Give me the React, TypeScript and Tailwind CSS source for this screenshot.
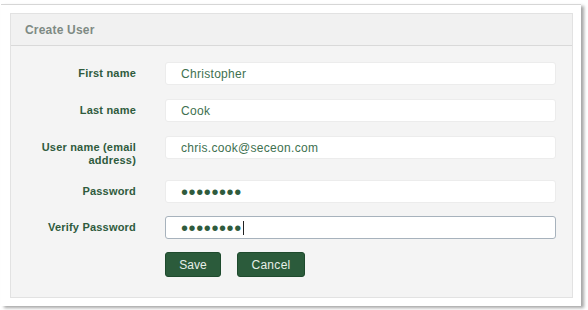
import React from "react";

const font = { fontFamily: '"Liberation Sans", Arial, sans-serif' };

function Label({ children }: { children: React.ReactNode }) {
  return (
    <div className="w-[125px] shrink-0 pt-[5px] text-right text-[11px] leading-[13px] font-bold tracking-[0.2px] text-[#2f5b3d]">
      {children}
    </div>
  );
}

function Field({ value, focused, dots }: { value: string; focused?: boolean; dots?: boolean }) {
  return (
    <div
      className={
        "ml-[29px] flex h-[23px] w-[391px] items-center rounded-[3px] bg-white pl-[15px] " +
        (focused ? "border border-[#a7b2bc]" : "border border-[#ececec]")
      }
    >
      {dots ? (
        <span className="text-[20px] leading-none tracking-[0.6px] text-[#2f5b3d]">{value}</span>
      ) : (
        <span className="text-[12px] tracking-[0.3px] text-[#40704f]">{value}</span>
      )}
      {focused && <span className="ml-[1px] h-[14px] w-px bg-[#222]" />}
    </div>
  );
}

export default function App() {
  return (
    <div className="h-[310px] w-[588px] bg-white" style={font}>
      <div className="ml-[1px] mt-[4px] h-[302px] w-[580px] border-t border-[#d6d6d6] bg-white pl-[9px] pt-[8px] shadow-[3px_2px_3px_rgba(0,0,0,0.35)]">
        <div className="h-[285px] w-[563px] border border-[#e2e2e2] bg-[#f4f4f4]">
          <div className="flex h-[32px] items-center border-b border-[#d9d9d9] bg-[#f1f1f1] pl-[14px] text-[12px] font-bold tracking-[0.2px] text-[#7e8a84]">
            Create User
          </div>

          <div className="flex flex-col pt-[16px]">
            <div className="flex items-start">
              <Label>First name</Label>
              <Field value="Christopher" />
            </div>
            <div className="mt-[14px] flex items-start">
              <Label>Last name</Label>
              <Field value="Cook" />
            </div>
            <div className="mt-[14px] flex items-start">
              <Label>
                User name (email
                <br />
                address)
              </Label>
              <Field value="chris.cook@seceon.com" />
            </div>
            <div className="mt-[13px] flex items-start">
              <Label>Password</Label>
              <Field value="••••••••" dots />
            </div>
            <div className="mt-[13px] flex items-start">
              <Label>Verify Password</Label>
              <Field value="••••••••" dots focused />
            </div>
            <div className="ml-[154px] mt-[13px] flex gap-[16px]">
              <button className="h-[25px] w-[56px] rounded-[3px] border border-[#1e4a2d] bg-[#2b5b3b] text-[12px] text-[#e6eee8]">
                Save
              </button>
              <button className="h-[25px] w-[68px] rounded-[3px] border border-[#1e4a2d] bg-[#2b5b3b] text-[12px] tracking-[0.3px] text-[#e6eee8]">
                Cancel
              </button>
            </div>
          </div>
        </div>
      </div>
    </div>
  );
}
